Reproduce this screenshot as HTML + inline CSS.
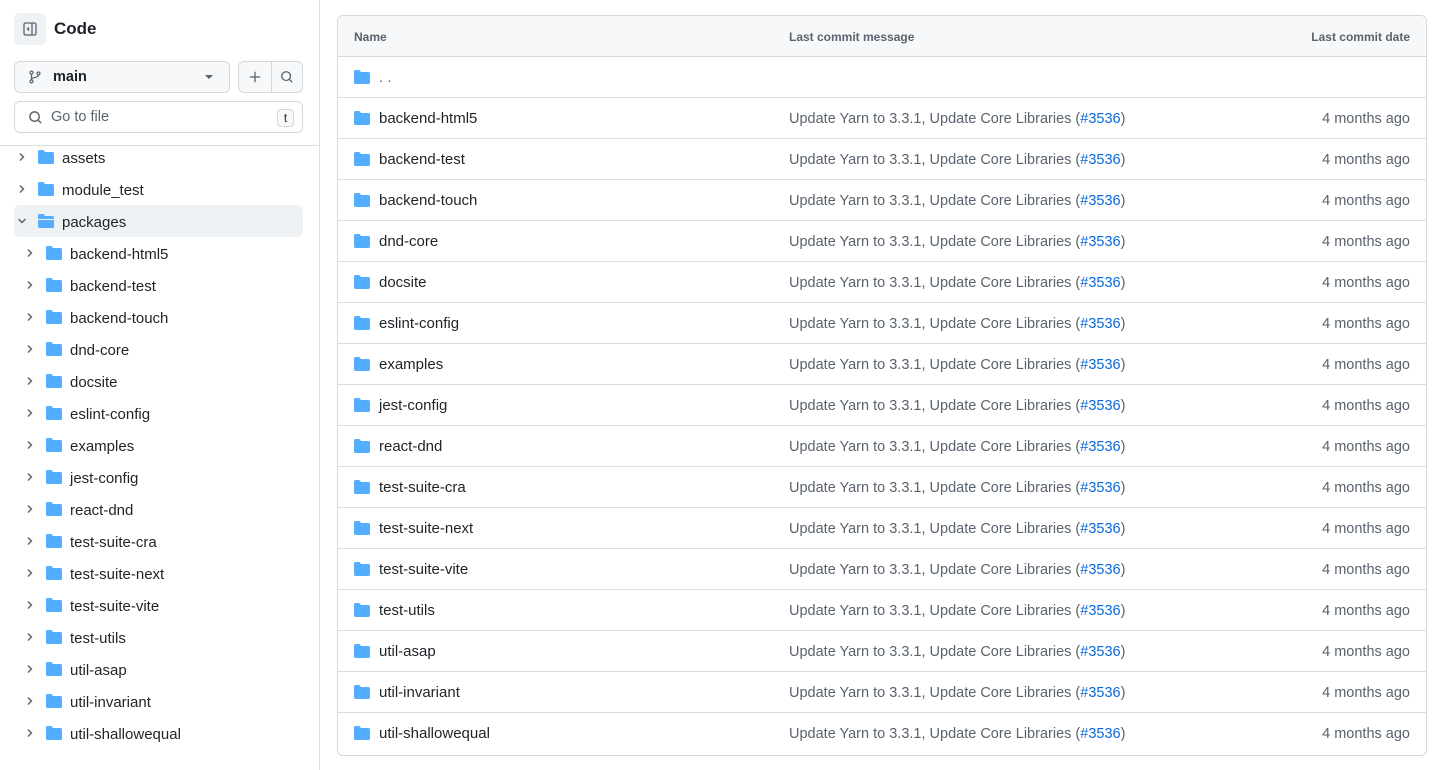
<!DOCTYPE html>
<html><head><meta charset="utf-8"><style>
*{box-sizing:border-box;margin:0;padding:0}
body{width:1440px;height:770px;overflow:hidden;background:#fff;font-family:"Liberation Sans",sans-serif;color:#1f2328;position:relative}
.side{position:absolute;left:0;top:0;width:320px;height:770px;border-right:1px solid #d8dee4}
.tbtn{position:absolute;left:14px;top:13px;width:32px;height:32px;border-radius:6px;background:#eff2f5;display:flex;align-items:center;justify-content:center}
.title{position:absolute;left:54px;top:19px;font-size:17px;font-weight:bold}
.branch{position:absolute;left:14px;top:61px;width:216px;height:32px;border:1px solid #d1d9e0;border-radius:6px;background:#f6f8fa;font-size:14.5px;font-weight:bold;padding-left:38px;line-height:31px}
.btns{position:absolute;left:238px;top:61px;width:65px;height:32px;border:1px solid #d1d9e0;border-radius:6px;background:#f6f8fa}
.go{position:absolute;left:14px;top:101px;width:289px;height:32px;border:1px solid #d1d9e0;border-radius:6px;font-size:14.5px;color:#59636e;padding-left:36px;line-height:31px}
.kbd{position:absolute;right:8px;top:7px;width:17px;height:18px;border:1px solid #d1d9e0;border-radius:4px;font-size:12px;line-height:16px;text-align:center;color:#1f2328;background:#f6f8fa}
.sep{position:absolute;left:0;top:145px;width:319px;height:1px;background:#d8dee4;box-shadow:0 2px 6px rgba(0,0,0,.06)}
.tr{position:absolute;height:32px;font-size:15px;line-height:32px}
.tr span{position:absolute;top:2px}
.tr .ch{top:11px;line-height:0}
.tr .fd{top:9px;line-height:0}
.tbl{position:absolute;left:337px;top:15px;width:1090px;height:741px;border:1px solid #d1d9e0;border-radius:6px;overflow:hidden}
.hd{height:41px;background:#f6f8fa;border-bottom:1px solid #d1d9e0;font-size:12px;font-weight:bold;color:#59636e;position:relative}
.hd span,.row span{position:absolute}
.row{height:41px;border-bottom:1px solid #d8dee4;position:relative;font-size:15px}
.row:last-child{border-bottom:none}
.row svg{position:absolute;left:16px;top:13px}
.nm{left:41px;top:12px}
.msg{left:451px;top:13px;color:#59636e;font-size:14.5px}
.msg a{color:#0969da;text-decoration:none}
.dt{right:16px;top:13px;color:#59636e;font-size:14.5px}
</style></head><body>
<div class="side">
<div class="tbtn"><svg width="16" height="16" viewBox="0 0 16 16" fill="none" stroke="#59636e" stroke-width="1.3"><rect x="2" y="2" width="12" height="12" rx="1.5"/><line x1="10" y1="2" x2="10" y2="14"/><path d="M7 6.5 5.5 8 7 9.5" fill="#59636e"/></svg></div>
<div class="title">Code</div>
<div class="branch"><svg style="position:absolute;left:13px;top:8px" width="14" height="14" viewBox="0 0 16 16" fill="none" stroke="#59636e" stroke-width="1.4"><circle cx="4" cy="3" r="1.7"/><circle cx="4" cy="13" r="1.7"/><circle cx="12" cy="4" r="1.7"/><path d="M4 5v6M12 6c0 3-8 2-8 5"/></svg>main<span style="position:absolute;right:16px;top:13px;border-left:4px solid transparent;border-right:4px solid transparent;border-top:4px solid #59636e"></span></div>
<div class="btns"><div style="position:absolute;left:32px;top:0;width:1px;height:30px;background:#d1d9e0"></div>
<svg style="position:absolute;left:9px;top:8px" width="14" height="14" viewBox="0 0 16 16" stroke="#59636e" stroke-width="1.5"><path d="M8 2v12M2 8h12"/></svg>
<svg style="position:absolute;left:41px;top:8px" width="14" height="14" viewBox="0 0 16 16" fill="none" stroke="#59636e" stroke-width="1.5"><circle cx="7" cy="7" r="5"/><path d="M10.5 10.5 14 14"/></svg></div>
<div class="go"><svg style="position:absolute;left:13px;top:8px" width="15" height="15" viewBox="0 0 16 16" fill="none" stroke="#59636e" stroke-width="1.5"><circle cx="7" cy="7" r="5"/><path d="M10.5 10.5 14 14"/></svg>Go to file<div class="kbd">t</div></div>
<div class="sep"></div>
<div id="tree"></div>
</div>
<div class="tbl">
<div class="hd"><span style="left:16px;top:14px">Name</span><span style="left:451px;top:14px">Last commit message</span><span style="right:16px;top:14px">Last commit date</span></div>
<div id="rows"></div>
</div>
<script>
var F='<svg width="16" height="14" viewBox="0 0 16 14"><path d="M0 1.5C0 .7.7 0 1.5 0h4l1.5 2h7.5c.8 0 1.5.7 1.5 1.5v9c0 .8-.7 1.5-1.5 1.5h-13C.7 14 0 13.3 0 12.5z" fill="#54aeff"/></svg>';
var FO='<svg width="16" height="14" viewBox="0 0 16 14"><path d="M0 1.5C0 .7.7 0 1.5 0h4l1.5 2h7.5c.8 0 1.5.7 1.5 1.5V5H0z" fill="#54aeff"/><path d="M0 6h16v6.5c0 .8-.7 1.5-1.5 1.5h-13C.7 14 0 13.3 0 12.5z" fill="#54aeff"/></svg>';
var items=["backend-html5","backend-test","backend-touch","dnd-core","docsite","eslint-config","examples","jest-config","react-dnd","test-suite-cra","test-suite-next","test-suite-vite","test-utils","util-asap","util-invariant","util-shallowequal"];
var ch='<svg width="10" height="10" viewBox="0 0 10 10" fill="none" stroke="#59636e" stroke-width="1.4"><path d="M3 1.5 6.5 5 3 8.5"/></svg>';
var cd='<svg width="10" height="10" viewBox="0 0 10 10" fill="none" stroke="#59636e" stroke-width="1.4"><path d="M1.5 3 5 6.5 8.5 3"/></svg>';
var t='';
function tr(y,ind,name,open){t+='<div class="tr" style="top:'+(y)+'px;left:14px;width:289px;'+(open?'background:#eff2f5;border-radius:6px;':'')+'"><span class="ch" style="left:'+(3+ind)+'px">'+(open?cd:ch)+'</span><span class="fd" style="left:'+(24+ind)+'px">'+(open?FO:F)+'</span><span style="left:'+(48+ind)+'px">'+name+'</span></div>';}
tr(141,0,"assets");tr(173,0,"module_test");tr(205,0,"packages",1);
items.forEach(function(n,i){tr(237+32*i,8,n)});
document.getElementById('tree').innerHTML=t;
var r='<div class="row">'+F+'<span class="nm" style="color:#59636e">. .</span></div>';
items.forEach(function(n){r+='<div class="row">'+F+'<span class="nm">'+n+'</span><span class="msg">Update Yarn to 3.3.1, Update Core Libraries (<a>#3536</a>)</span><span class="dt">4 months ago</span></div>'});
document.getElementById('rows').innerHTML=r;
</script>
</body></html>
